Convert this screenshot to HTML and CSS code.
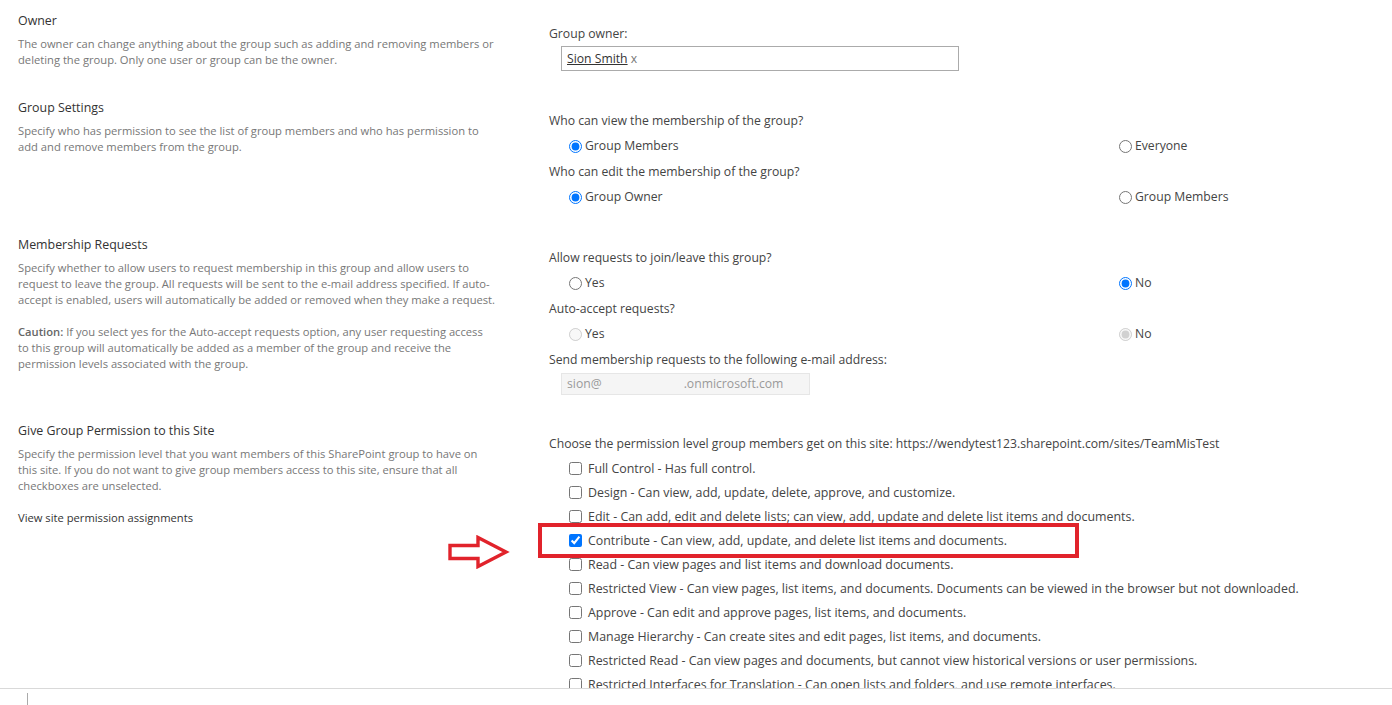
FILE: index.html
```html
<!DOCTYPE html>
<html lang="en">
<head>
    <meta charset="UTF-8">
    <title>Change Group Settings</title>
    <link rel="stylesheet" href="styles.css">
</head>
<body>
    <div class="page">
        <div class="section">
            <div class="section-info">
                <h3>Owner</h3>
                <p>The owner can change anything about the group such as adding and removing members or deleting the group. Only one user or group can be the owner.</p>
            </div>
            <div class="section-fields">
                <div class="field-label">Group owner:</div>
                <div class="people-picker">
                    <span class="person">Sion Smith</span> <span class="remove">x</span>
                </div>
            </div>
        </div>

        <div class="section">
            <div class="section-info">
                <h3>Group Settings</h3>
                <p>Specify who has permission to see the list of group members and who has permission to add and remove members from the group.</p>
            </div>
            <div class="section-fields">
                <div class="field-label">Who can view the membership of the group?</div>
                <div class="options">
                    <label><input type="radio" name="view" checked>Group Members</label>
                    <label><input type="radio" name="view">Everyone</label>
                </div>
                <div class="field-label">Who can edit the membership of the group?</div>
                <div class="options">
                    <label><input type="radio" name="edit" checked>Group Owner</label>
                    <label><input type="radio" name="edit">Group Members</label>
                </div>
            </div>
        </div>

        <div class="section">
            <div class="section-info">
                <h3>Membership Requests</h3>
                <p>Specify whether to allow users to request membership in this group and allow users to request to leave the group. All requests will be sent to the e-mail address specified. If auto-accept is enabled, users will automatically be added or removed when they make a request.</p>
                <p class="caution"><strong>Caution:</strong> If you select yes for the Auto-accept requests option, any user requesting access to this group will automatically be added as a member of the group and receive the permission levels associated with the group.</p>
            </div>
            <div class="section-fields">
                <div class="field-label">Allow requests to join/leave this group?</div>
                <div class="options">
                    <label><input type="radio" name="allow">Yes</label>
                    <label><input type="radio" name="allow" checked>No</label>
                </div>
                <div class="field-label">Auto-accept requests?</div>
                <div class="options disabled">
                    <label><input type="radio" name="auto" disabled>Yes</label>
                    <label><input type="radio" name="auto" checked disabled>No</label>
                </div>
                <div class="field-label">Send membership requests to the following e-mail address:</div>
                <div class="email-box">sion@<span class="redacted"></span>.onmicrosoft.com</div>
            </div>
        </div>

        <div class="section">
            <div class="section-info">
                <h3>Give Group Permission to this Site</h3>
                <p>Specify the permission level that you want members of this SharePoint group to have on this site. If you do not want to give group members access to this site, ensure that all checkboxes are unselected.</p>
                <p><a href="#" class="info-link">View site permission assignments</a></p>
            </div>
            <div class="section-fields">
                <div class="field-label">Choose the permission level group members get on this site: https://wendytest123.sharepoint.com/sites/TeamMisTest</div>
                <div class="perm-list">
                    <label><input type="checkbox">Full Control - Has full control.</label>
                    <label><input type="checkbox">Design - Can view, add, update, delete, approve, and customize.</label>
                    <label><input type="checkbox">Edit - Can add, edit and delete lists; can view, add, update and delete list items and documents.</label>
                    <label><input type="checkbox" checked>Contribute - Can view, add, update, and delete list items and documents.</label>
                    <label><input type="checkbox">Read - Can view pages and list items and download documents.</label>
                    <label><input type="checkbox">Restricted View - Can view pages, list items, and documents. Documents can be viewed in the browser but not downloaded.</label>
                    <label><input type="checkbox">Approve - Can edit and approve pages, list items, and documents.</label>
                    <label><input type="checkbox">Manage Hierarchy - Can create sites and edit pages, list items, and documents.</label>
                    <label><input type="checkbox">Restricted Read - Can view pages and documents, but cannot view historical versions or user permissions.</label>
                    <label><input type="checkbox">Restricted Interfaces for Translation - Can open lists and folders, and use remote interfaces.</label>
                </div>
            </div>
        </div>

        <!-- annotations drawn over the screenshot -->
        <div class="highlight-box"></div>
        <svg class="highlight-arrow" width="62" height="34" viewBox="0 0 62 34">
            <path d="M2 10.5 H30 V2.5 L58 17 L30 31.5 V23.5 H2 Z" fill="none" stroke="#e1232b" stroke-width="3.4" stroke-linejoin="miter"/>
        </svg>
    </div>
    <div class="footer"><span class="caret"></span></div>
</body>
</html>
```

FILE: styles.css
```css
body {
    margin: 0;
    font-family: "Open Sans", "Noto Sans", sans-serif;
    color: #444;
    background: #fff;
}
.page {
    position: relative;
    height: 687px;
    padding-top: 1px;
    overflow: hidden;
}
.section {
    display: grid;
    grid-template-columns: 531px 1fr;
    padding: 10px 0 15px 18px;
}
.section-info h3 {
    margin: 0 0 5px 0;
    font-size: 12.4px;
    font-weight: normal;
    line-height: 20px;
    color: #333;
}
.section-info p {
    margin: 0 0 16px 0;
    width: 480px;
    font-size: 11.2px;
    line-height: 16px;
    color: #777;
}
.section-info p.caution {
    width: 472px;
}
.section-info p:last-child {
    margin-bottom: 0;
}
.section-info strong {
    color: #666;
    font-weight: 600;
}
.info-link {
    color: #333;
    text-decoration: none;
}
.section-fields {
    padding-top: 10px;
    font-size: 12.2px;
}
.field-label {
    line-height: 25px;
    color: #444;
}
.people-picker {
    width: 391px;
    height: 23px;
    margin: 0 0 2px 12px;
    padding: 0 0 0 5px;
    border: 1px solid #ababab;
    line-height: 23px;
    color: #333;
}
.person {
    text-decoration: underline;
    color: #333;
}
.remove {
    color: #777;
}
.options {
    display: grid;
    grid-template-columns: 550px auto;
    padding-left: 15px;
    line-height: 26px;
}
.options label {
    display: flex;
    align-items: center;
}
.options input {
    margin: 0 3px 0 5px;
    width: 13px;
    height: 13px;
}
.options.disabled label {
    color: #444;
}
.email-box {
    width: 242px;
    height: 20px;
    margin: 1px 0 1px 12px;
    padding-left: 5px;
    background: #f5f5f5;
    border: 1px solid #e6e6e6;
    line-height: 20px;
    color: #9a9a9a;
}
.redacted {
    display: inline-block;
    width: 82px;
}
.perm-list {
    padding-left: 16px;
    font-size: 12.4px;
}
.perm-list label {
    display: flex;
    align-items: center;
    height: 24px;
    white-space: nowrap;
    color: #444;
}
.perm-list input {
    margin: 0 6px 0 4px;
    width: 13px;
    height: 13px;
}
.highlight-box {
    position: absolute;
    left: 538px;
    top: 523px;
    width: 533px;
    height: 27px;
    border: 4px solid #e1232b;
}
.highlight-arrow {
    position: absolute;
    left: 448px;
    top: 535px;
}
.footer {
    height: 16px;
    border-top: 1px solid #d9d9d9;
    position: relative;
}
.caret {
    display: block;
    width: 1px;
    height: 12px;
    margin: 4px 0 0 27px;
    background: #aaa;
}
```
